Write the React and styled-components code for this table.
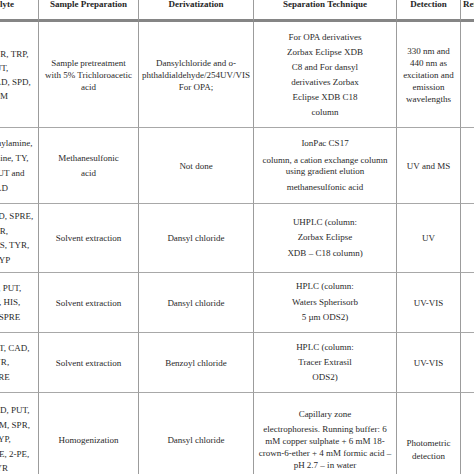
import React from "react";
import styled, { createGlobalStyle } from "styled-components";

const GlobalStyle = createGlobalStyle`
  html, body {
    margin: 0;
    padding: 0;
    background: #ffffff;
  }
  body {
    font-family: "Liberation Serif", "Times New Roman", serif;
    color: #303030;
  }
`;

const columns = [79, 100, 115, 143, 64, 80];

const headers = [
  "Analyte",
  "Sample Preparation",
  "Derivatization",
  "Separation Technique",
  "Detection",
  "Ref.",
];

// each cell: lh = line height, gap = space between paragraphs, paras = lines
const rows = [
  {
    height: 106,
    cells: [
      { lh: 14, paras: [["HIS, TYR, TRP,", "PUT,", "PHE, CAD, SPD,", "SPM"]] },
      { lh: 12, paras: [["Sample pretreatment", "with 5% Trichloroacetic", "acid"]] },
      { lh: 12, paras: [["Dansylchloride and o-", "phthaldialdehyde/254UV/VIS", "For OPA;"]] },
      {
        lh: 15,
        paras: [[
          "For OPA derivatives",
          "Zorbax Eclipse XDB",
          "C8 and For dansyl",
          "derivatives Zorbax",
          "Eclipse XDB C18",
          "column",
        ]],
      },
      { lh: 12, paras: [["330 nm and", "440 nm as", "excitation and", "emission", "wavelengths"]] },
      { lh: 12, paras: [[""]] },
    ],
  },
  {
    height: 76,
    cells: [
      { lh: 15, paras: [["Phenylethylamine,", "Tryptamine, TY,", "HIS, PUT and", "CLD"]] },
      { lh: 14.5, paras: [["Methanesulfonic", "acid"]] },
      { lh: 12, paras: [["Not done"]] },
      {
        lh: 11,
        gap: 5.5,
        paras: [
          ["IonPac CS17"],
          ["column, a cation exchange column", "using gradient elution"],
          ["methanesulfonic acid"],
        ],
      },
      { lh: 12, paras: [["UV and MS"]] },
      { lh: 12, paras: [[""]] },
    ],
  },
  {
    height: 69,
    cells: [
      { lh: 14.5, paras: [["CAD, SPD, SPRE,", "SPR,", "PHE, HIS, TYR,", "TRYP"]] },
      { lh: 12, paras: [["Solvent extraction"]] },
      { lh: 12, paras: [["Dansyl chloride"]] },
      { lh: 15.5, paras: [["UHPLC (column:", "Zorbax Eclipse", "XDB – C18 column)"]] },
      { lh: 12, paras: [["UV"]] },
      { lh: 12, paras: [[""]] },
    ],
  },
  {
    height: 60,
    cells: [
      { lh: 14.5, paras: [["TRYP, PUT,", "TRYP, HIS,", "SPD, SPRE"]] },
      { lh: 12, paras: [["Solvent extraction"]] },
      { lh: 12, paras: [["Dansyl chloride"]] },
      { lh: 15.5, paras: [["HPLC (column:", "Waters Spherisorb", "5 µm ODS2)"]] },
      { lh: 12, paras: [["UV-VIS"]] },
      { lh: 12, paras: [[""]] },
    ],
  },
  {
    height: 60,
    cells: [
      { lh: 14.5, paras: [["HIS, PUT, CAD,", "TYR,", "SPRE"]] },
      { lh: 12, paras: [["Solvent extraction"]] },
      { lh: 12, paras: [["Benzoyl chloride"]] },
      { lh: 15, paras: [["HPLC (column:", "Tracer Extrasil", "ODS2)"]] },
      { lh: 12, paras: [["UV-VIS"]] },
      { lh: 12, paras: [[""]] },
    ],
  },
  {
    height: 94,
    cells: [
      {
        lh: 14.5,
        paras: [["HIS, CAD, PUT,", "SPD, SPM, SPR,", "TRYP,", "HIS, PHE, 2-PE,", "TYR"]],
      },
      { lh: 12, paras: [["Homogenization"]] },
      { lh: 12, paras: [["Dansyl chloride"]] },
      {
        lh: 12,
        gap: 3,
        paras: [
          ["Capillary zone"],
          [
            "electrophoresis. Running buffer: 6",
            "mM copper sulphate + 6 mM 18-",
            "crown-6-ether + 4 mM formic acid –",
            "pH 2.7 – in water",
          ],
        ],
      },
      { lh: 13, top: 20, paras: [["Photometric", "detection"]] },
      { lh: 12, paras: [[""]] },
    ],
  },
];

export default function App() {
  return (
    <>
      <GlobalStyle />
      <Viewport>
        <Grid
          $cols={columns.map((c) => `${c}px`).join(" ")}
          $rows={["30px", ...rows.map((r) => `${r.height}px`)].join(" ")}
        >
          {headers.map((h, i) => (
            <HeadCell key={h} $left={i === headers.length - 1}>
              {h}
            </HeadCell>
          ))}
          {rows.map((row, r) =>
            row.cells.map((cell, c) => (
              <Cell
                key={`${r}-${c}`}
                $lh={cell.lh}
                $gap={cell.gap || 0}
                $top={cell.top || 0}
              >
                {cell.paras.map((para, p) => (
                  <Para key={p}>
                    {para.map((line, l) => (
                      <Line key={l}>{line}</Line>
                    ))}
                  </Para>
                ))}
              </Cell>
            ))
          )}
        </Grid>
      </Viewport>
    </>
  );
}

const Viewport = styled.div`
  width: 474px;
  height: 474px;
  overflow: hidden;
  background: #ffffff;
`;

const Grid = styled.div`
  display: grid;
  grid-template-columns: ${(p) => p.$cols};
  grid-template-rows: ${(p) => p.$rows};
  margin-left: -40px;
  margin-top: -8px;
  font-size: 9px;
`;

const HeadCell = styled.div`
  box-sizing: border-box;
  display: flex;
  align-items: center;
  justify-content: ${(p) => (p.$left ? "flex-start" : "center")};
  padding: 0 2px 3px;
  font-weight: bold;
  white-space: nowrap;
  color: #262626;
  border-right: 1px solid #9c9c9c;
  border-bottom: 3px solid #858585;

  &:last-child {
    border-right: none;
  }
`;

const Cell = styled.div`
  box-sizing: border-box;
  display: flex;
  flex-direction: column;
  align-items: center;
  justify-content: center;
  gap: ${(p) => p.$gap}px;
  padding: ${(p) => p.$top}px 2px 0;
  text-align: center;
  line-height: ${(p) => p.$lh}px;
  color: #2a2a2a;
  border-right: 1px solid #9c9c9c;
  border-bottom: 1px solid #a8a8a8;

  &:nth-child(6n) {
    border-right: none;
  }
`;

const Para = styled.div`
  display: flex;
  flex-direction: column;
  align-items: center;
`;

const Line = styled.span`
  white-space: nowrap;
`;
